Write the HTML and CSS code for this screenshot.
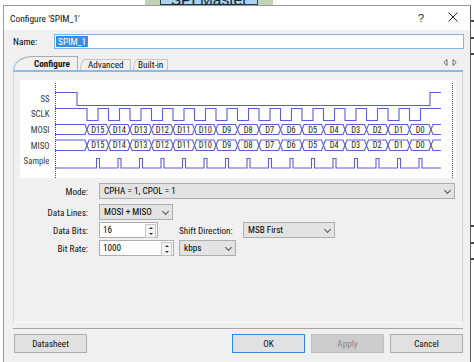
FILE: index.html
```html
<!DOCTYPE html>
<html>
  <head>
    <title>Configure 'SPIM_1'</title>
    <meta charset="UTF-8">
    <link rel="stylesheet" href="styles.css">
  </head>
  <body>
    <div id="canvas">
      <div class="block"><span class="hatch"></span><div class="block-name">SPI Master</div><span class="hatch"></span></div>
      <span class="pin" style="top: 20px"></span>
      <span class="pin" style="top: 37px"></span>
      <span class="pin" style="top: 53px"></span>
      <span class="pin" style="top: 225px"></span>
      <span class="pin" style="top: 242px"></span>
      <span class="pin" style="top: 258px"></span>
    </div>
    <div id="dialog">
      <div class="titlebar">
        <span class="title">Configure 'SPIM_1'</span>
        <span class="help">?</span>
        <span class="close">
          <svg width="10" height="10" viewBox="0 0 10 10"><path d="M0.5 0.5L9.5 9.5M9.5 0.5L0.5 9.5" stroke="#222" stroke-width="1"/></svg>
        </span>
      </div>
      <div class="dlg-body">
        <div class="name-row">
          <span class="name-label">Name:</span>
          <div class="name-field"><span class="selected">SPIM_1</span></div>
        </div>
        <div class="tabs">
          <div class="tab active">Configure</div>
          <div class="tab adv">Advanced</div>
          <div class="tab builtin">Built-in</div>
          <div class="tab-arrows">
            <svg width="14" height="7" viewBox="0 0 14 7"><path d="M4 0.5L0.8 3.5L4 6.5Z" fill="#fff" stroke="#666"/><path d="M10 0.5L13.2 3.5L10 6.5Z" fill="#fff" stroke="#666"/></svg>
          </div>
        </div>
        <div class="panel">
          <div class="wave-box">
            <svg id="waves" width="436" height="98" viewBox="20 80 436 98"></svg>
          </div>
          <div class="form">
            <div class="row r-mode">
              <span class="label">Mode:</span>
              <div class="select w-mode">CPHA = 1, CPOL = 1<span class="chev"></span></div>
            </div>
            <div class="row r-lines">
              <span class="label">Data Lines:</span>
              <div class="select w-lines">MOSI + MISO<span class="chev"></span></div>
            </div>
            <div class="row">
              <span class="label">Data Bits:</span>
              <div class="spin w-bits">16<span class="spinner"><i class="up"></i><i class="down"></i></span></div>
              <span class="label-inline">Shift Direction:</span>
              <div class="select w-shift">MSB First<span class="chev"></span></div>
            </div>
            <div class="row">
              <span class="label">Bit Rate:</span>
              <div class="spin w-rate">1000<span class="spinner"><i class="up"></i><i class="down"></i></span></div>
              <div class="select w-kbps">kbps<span class="chev"></span></div>
            </div>
          </div>
        </div>
        <div class="separator"></div>
        <div class="buttons">
          <div class="btn">Datasheet</div>
          <div class="btn ok">OK</div>
          <div class="btn disabled">Apply</div>
          <div class="btn">Cancel</div>
        </div>
      </div>
    </div>
    <script>
      // timing diagram, drawn in page coordinates (viewBox starts at 20,80)
      var X0 = 87, P = 21.5, LOW = 11, S = 2;
      var svg = document.getElementById("waves");
      var out = "";

      function line(d) { out += '<path d="' + d + '" class="wave"/>'; }

      out += '<path d="M55.5 83V178M452.5 83V178" class="dots"/>';

      var labels = [["SS", 98.5], ["SCLK", 114], ["MOSI", 130], ["MISO", 145.5], ["Sample", 161]];
      for (var i = 0; i < labels.length; i++)
        out += '<text x="49.5" y="' + (labels[i][1] + 3) + '" class="sig">' + labels[i][0] + '</text>';

      line("M55 92.5H77V105.5H430V92.5H441");

      var d = "M55 108.5H" + X0;
      for (var k = 0; k < 16; k++) {
        var f = X0 + P * k;
        d += "V120.5H" + (f + LOW) + "V108.5";
        if (k < 15) d += "H" + (f + P);
      }
      line(d + "H441");

      function bus(top, bot) {
        var mid = (top + bot) / 2, end = X0 + P * 16;
        line("M55 " + top + "H" + (X0 - S) + "L" + X0 + " " + mid + "L" + (X0 - S) + " " + bot + "H55");
        for (var k = 0; k < 16; k++) {
          var a = X0 + P * k, b = a + P;
          line("M" + a + " " + mid + "L" + (a + S) + " " + top + "H" + (b - S) + "L" + b + " " + mid +
               "L" + (b - S) + " " + bot + "H" + (a + S) + "Z");
          out += '<text x="' + (a + b) / 2 + '" y="' + (mid + 3) + '" class="bit">D' + (15 - k) + '</text>';
        }
        line("M441 " + top + "H" + (end + S) + "L" + end + " " + mid + "L" + (end + S) + " " + bot + "H441");
      }
      bus(124.5, 134.5);
      bus(140, 150.5);

      d = "M55 168";
      for (k = 0; k < 16; k++) {
        var r = X0 + P * k + LOW;
        d += "H" + (r - 1.5) + "V158.5H" + (r + 1.5) + "V168";
      }
      line(d + "H441");

      svg.innerHTML = out;
    </script>
  </body>
</html>
```
FILE: styles.css
```css
body
{
  margin: 0;
  background-color: #ffffff;
  font-family: "Roboto Condensed", "Liberation Sans", sans-serif;
  font-size: 9.2px;
  color: #000000;
  overflow: hidden;
  height: 362px;
}
#canvas
{
  position: relative;
  height: 5px;
}
.block
{
  position: absolute;
  left: 145px;
  top: -16px;
  display: flex;
  height: 21px;
}
.hatch
{
  width: 15px;
  background-color: #e4ecd8;
  background-image: radial-gradient(#9fb48a 0.6px, transparent 0.8px);
  background-size: 2px 2px;
}
.block-name
{
  width: 96px;
  background-color: #a9d3ee;
  border: 1px solid #2b3a4a;
  border-top: none;
  font-family: "Liberation Sans", sans-serif;
  font-size: 15.5px;
  line-height: 31px;
  text-align: center;
  color: #1b2430;
}
.pin
{
  position: absolute;
  left: 471px;
  width: 3px;
  height: 2px;
  background-color: #4a4a4a;
}
#dialog
{
  margin-left: 3px;
  width: 466px;
  height: 357px;
  border: 1px solid #9a9a9a;
  border-right-color: #5a5a5a;
  border-bottom: none;
  background-color: #f0f0f0;
}
.titlebar
{
  display: flex;
  align-items: center;
  height: 24px;
  padding-left: 6px;
  background-color: #ffffff;
}
.title
{
  flex: 1;
  font-size: 9.5px;
  color: #111111;
}
.help
{
  width: 14px;
  margin-right: 16px;
  text-align: center;
  font-family: "Liberation Sans", sans-serif;
  font-size: 11px;
  color: #333333;
}
.close
{
  display: flex;
  justify-content: center;
  width: 18px;
  margin-right: 8px;
  margin-top: -2px;
}
.dlg-body
{
  padding-top: 4px;
}
.name-row
{
  display: flex;
  align-items: center;
  height: 15px;
  margin-left: 9px;
}
.name-label
{
  width: 41px;
  font-size: 9.5px;
}
.name-field
{
  box-sizing: border-box;
  width: 410px;
  height: 15px;
  border: 1px solid #7eb4ea;
  background-color: #ffffff;
  display: flex;
  align-items: center;
}
.selected
{
  margin-left: 1px;
  padding: 0 2px;
  background-color: #3390e6;
  color: #ffffff;
  line-height: 11px;
  font-size: 9.5px;
}
.tabs
{
  display: flex;
  align-items: flex-end;
  height: 15px;
  width: 450px;
  margin: 6px 0 0 9px;
  border-bottom: 2px solid #8bbbe6;
}
.tab
{
  box-sizing: border-box;
  height: 11px;
  border: 1px solid #c4c4c4;
  border-bottom: none;
  border-top-left-radius: 5px 11px;
  margin-left: 2px;
  line-height: 10px;
  color: #111111;
}
.tab.active
{
  height: 14px;
  width: 65px;
  margin-left: 0;
  padding-left: 20px;
  border-color: #a9a9a9;
  border-left-color: #8bbbe6;
  border-top-left-radius: 20px 14px;
  font-weight: bold;
  line-height: 13px;
}
.tab.adv
{
  width: 51px;
  padding-left: 7px;
}
.tab.builtin
{
  width: 35px;
  padding-left: 4px;
}
.tab-arrows
{
  margin-left: auto;
  margin-right: 6px;
  height: 13px;
}
.panel
{
  box-sizing: border-box;
  width: 450px;
  height: 251px;
  margin-left: 9px;
  padding: 8px 0 0 6px;
  border: 1px solid #d6d6d6;
  border-top: none;
  border-bottom-color: #fbfbfb;
}
.wave-box
{
  width: 436px;
  height: 98px;
  background-color: #ffffff;
}
#waves
{
  display: block;
}
.wave
{
  fill: none;
  stroke: #5d5dd8;
  stroke-width: 1.1;
}
.dots
{
  fill: none;
  stroke: #444444;
  stroke-width: 1;
  stroke-dasharray: 1 1;
}
.sig
{
  font-size: 8.8px;
  fill: #3a3a3a;
  text-anchor: end;
}
.bit
{
  font-size: 8.4px;
  fill: #222222;
  text-anchor: middle;
}
.form
{
  margin: 5px 0 0 -6px;
}
.row
{
  display: flex;
  align-items: center;
  height: 16px;
  margin-bottom: 2px;
}
.r-mode
{
  margin-bottom: 5px;
}
.label
{
  width: 74px;
  margin-right: 11px;
  text-align: right;
  color: #111111;
  white-space: nowrap;
}
.label-inline
{
  margin-left: 21px;
  width: 52px;
  margin-right: 12px;
  color: #111111;
  white-space: nowrap;
}
.select
{
  box-sizing: border-box;
  position: relative;
  height: 16px;
  padding-left: 4px;
  line-height: 14px;
  background-color: #e3e3e3;
  border: 1px solid #adadad;
  white-space: nowrap;
}
.chev
{
  position: absolute;
  right: 4px;
  top: 4px;
  width: 4px;
  height: 4px;
  border-right: 1px solid #555555;
  border-bottom: 1px solid #555555;
  transform: rotate(45deg);
}
.w-mode { width: 356px; }
.w-lines { width: 74px; }
.w-shift { width: 92px; }
.w-kbps { width: 57px; margin-left: 5px; }
.spin
{
  box-sizing: border-box;
  position: relative;
  height: 16px;
  padding-left: 3px;
  line-height: 14px;
  background-color: #ffffff;
  border: 1px solid #adadad;
}
.w-bits { width: 59px; }
.w-rate { width: 75px; }
.spinner
{
  position: absolute;
  right: 1px;
  top: 1px;
  width: 9px;
  height: 12px;
  display: flex;
  flex-direction: column;
  border: 1px solid #c8c8c8;
  background-color: #f4f4f4;
}
.spinner i
{
  flex: 1;
  display: flex;
  align-items: center;
  justify-content: center;
}
.spinner i::after
{
  content: "";
  border-left: 2px solid transparent;
  border-right: 2px solid transparent;
}
.up::after { border-bottom: 2px solid #333333; }
.down::after { border-top: 2px solid #333333; }
.separator
{
  width: 450px;
  margin: 5px 0 0 9px;
  border-top: 1px solid #a5a5a5;
}
.buttons
{
  display: flex;
  gap: 6px;
  margin: 5px 7px 0 10px;
}
.btn
{
  box-sizing: border-box;
  width: 73px;
  height: 19px;
  line-height: 17px;
  text-align: center;
  background-color: #e1e1e1;
  border: 1px solid #adadad;
  color: #111111;
}
.btn.ok
{
  margin-left: auto;
  border-color: #2f86d6;
}
.btn.disabled
{
  background-color: #cccccc;
  border-color: #bfbfbf;
  color: #8a8a8a;
}
```
